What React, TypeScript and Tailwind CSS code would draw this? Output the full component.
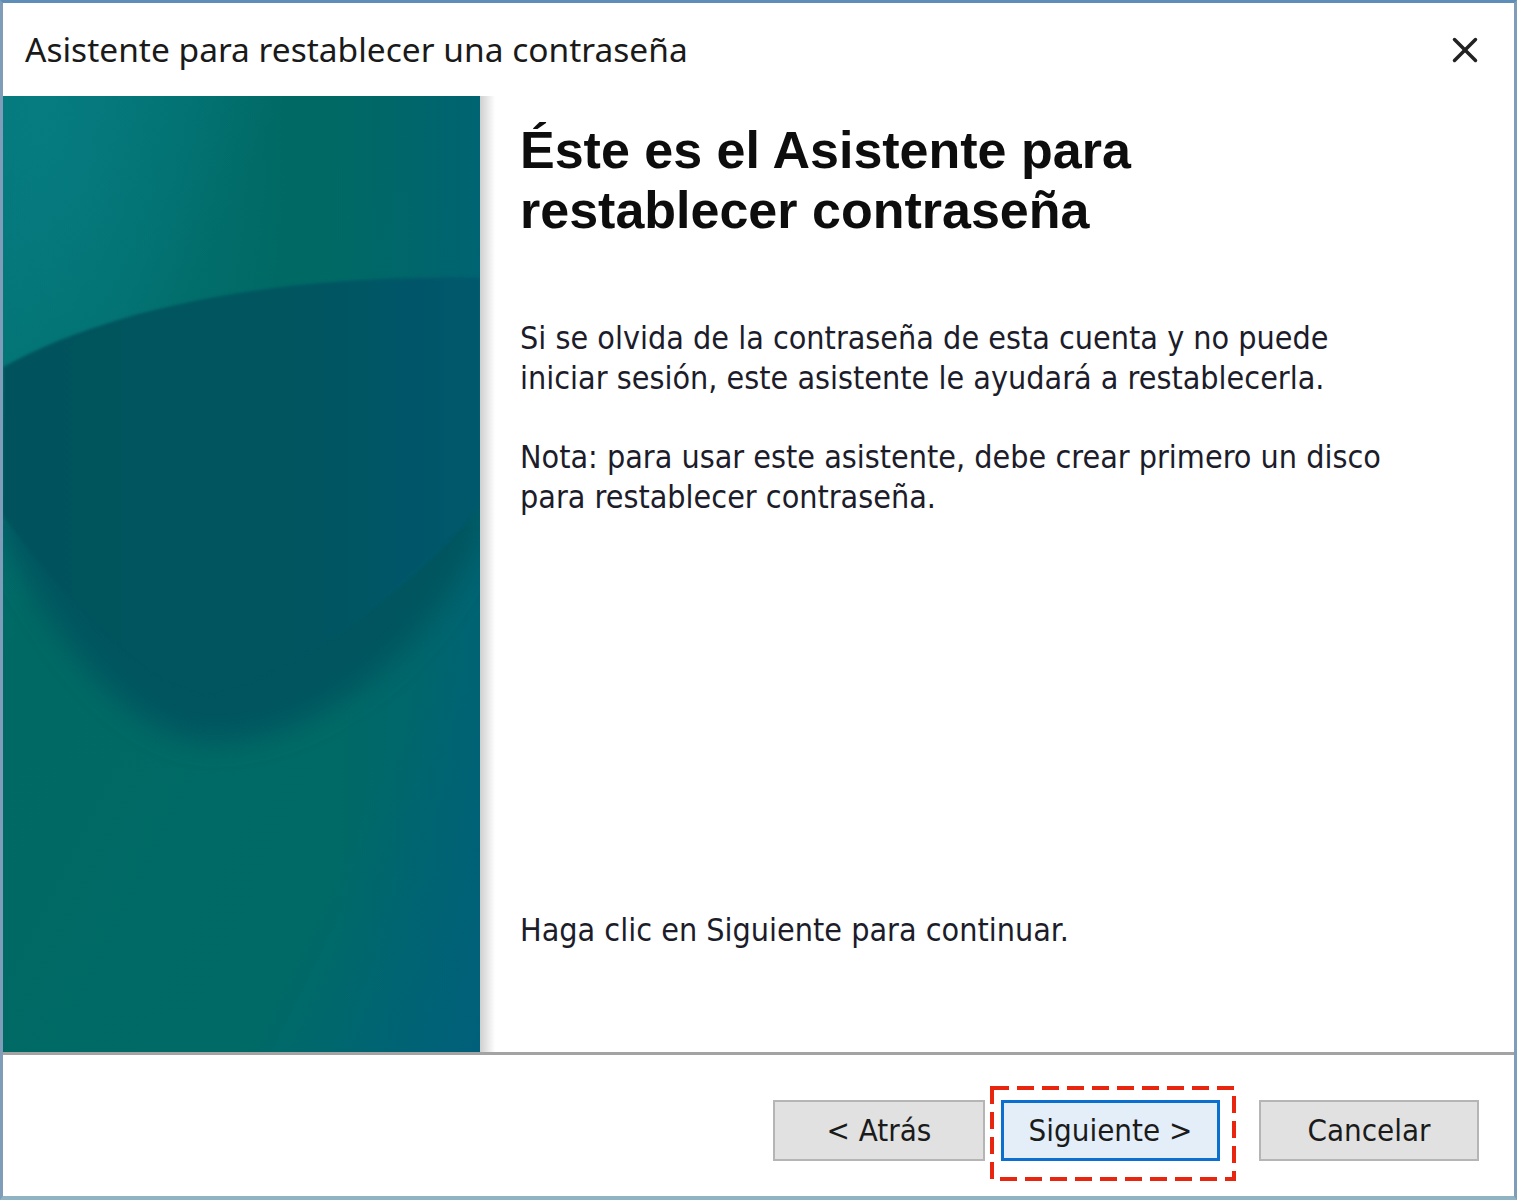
import { X } from "lucide-react";

const body = { fontFamily: '"DejaVu Sans Condensed", "DejaVu Sans", sans-serif' };

const WizardArt = () => (
  <svg viewBox="0 0 477 956" preserveAspectRatio="none" className="h-full w-full">
    <defs>
      <linearGradient id="base" x1="0" y1="0" x2="1" y2="1">
        <stop offset="0" stopColor="#03777b" />
        <stop offset="0.3" stopColor="#006964" />
        <stop offset="0.75" stopColor="#006a66" />
        <stop offset="1" stopColor="#00627a" />
      </linearGradient>
      <radialGradient id="glow" cx="0.1" cy="0.04" r="0.5">
        <stop offset="0" stopColor="#077e84" stopOpacity="0.7" />
        <stop offset="1" stopColor="#077e84" stopOpacity="0" />
      </radialGradient>
      <linearGradient id="dark" x1="0" y1="0" x2="1" y2="0">
        <stop offset="0" stopColor="#00535c" />
        <stop offset="0.6" stopColor="#00545f" />
        <stop offset="1" stopColor="#00586c" />
      </linearGradient>
      <linearGradient id="edge" x1="0" y1="0" x2="1" y2="0">
        <stop offset="0" stopColor="#005f74" stopOpacity="0" />
        <stop offset="1" stopColor="#005f7a" stopOpacity="0.6" />
      </linearGradient>
      <filter id="soft" x="-20%" y="-20%" width="140%" height="140%">
        <feGaussianBlur stdDeviation="14" />
      </filter>
      <filter id="softer" x="-5%" y="-5%" width="110%" height="110%">
        <feGaussianBlur stdDeviation="1.5" />
      </filter>
    </defs>
    <rect width="477" height="956" fill="url(#base)" />
    <rect width="477" height="956" fill="url(#glow)" />
    <rect x="330" width="147" height="956" fill="url(#edge)" />
    <path
      d="M0 330 C 80 300, 200 380, 477 330 L 477 440 C 420 570, 300 650, 200 645 C 120 635, 50 540, 0 440 Z"
      fill="#00555f"
      filter="url(#soft)"
    />
    <path
      d="M0 271 C 120 205, 300 178, 477 182 L 477 410 C 430 470, 330 560, 210 600 C 130 590, 60 500, 0 420 Z"
      fill="url(#dark)"
      filter="url(#softer)"
    />
  </svg>
);

const Button = ({ label, primary, wide }: { label: string; primary?: boolean; wide?: boolean }) => (
  <button
    className={
      primary
        ? "flex h-[61px] w-[219px] items-center justify-center border-[3px] border-[#0a6fcf] bg-[#e3eef9] text-[31px] text-[#1b1b1b]"
        : wide
          ? "flex h-[61px] w-[220px] items-center justify-center border-2 border-[#b5b5b5] bg-[#e1e1e1] text-[31px] text-[#1b1b1b]"
          : "flex h-[61px] w-[212px] items-center justify-center border-2 border-[#b5b5b5] bg-[#e1e1e1] text-[31px] text-[#1b1b1b]"
    }
    style={body}
  >
    {label}
  </button>
);

export default function App() {
  return (
    <div className="flex h-[1200px] w-[1517px] flex-col border-x-[3px] border-b-[4px] border-t-[3px] border-x-[#7f9db8] border-b-[#8fb3c3] border-t-[#5e8db8] bg-white">
      <div className="flex h-[93px] shrink-0 items-center justify-between pl-[22px] pr-[28px]">
        <span
          className="text-[33.5px] text-[#1a1a1a]"
          style={{ fontFamily: '"Noto Sans", "Open Sans", sans-serif' }}
        >
          Asistente para restablecer una contraseña
        </span>
        <X size={42} strokeWidth={2} className="text-[#222]" />
      </div>

      <div className="flex h-[956px] shrink-0">
        <div className="w-[477px] shrink-0">
          <WizardArt />
        </div>
        <div className="w-[15px] shrink-0 bg-gradient-to-r from-[#cfcfcf] to-white" />
        <div className="flex flex-1 flex-col pl-[25px] pb-[102px] pt-[24px]">
          <h1
            className="text-[52px] font-bold leading-[60px] text-[#0d0d0d]"
            style={{ fontFamily: '"Liberation Sans", Arial, sans-serif' }}
          >
            Éste es el Asistente para
            <br />
            restablecer contraseña
          </h1>
          <div className="mt-[78px] text-[32px] leading-[40px] text-[#1c1c2a]" style={body}>
            <p>
              Si se olvida de la contraseña de esta cuenta y no puede
              <br />
              iniciar sesión, este asistente le ayudará a restablecerla.
            </p>
            <p className="mt-[39px]">
              Nota: para usar este asistente, debe crear primero un disco
              <br />
              para restablecer contraseña.
            </p>
          </div>
          <p className="mt-auto text-[32px] leading-[40px] text-[#1c1c2a]" style={body}>
            Haga clic en Siguiente para continuar.
          </p>
        </div>
      </div>

      <div className="h-[3px] shrink-0 bg-[#a3a3a3]" />

      <div className="flex flex-1 items-start justify-end pr-[35px] pt-[45px]">
        <Button label="< Atrás" />
        <div className="relative ml-[16px]">
          <Button label="Siguiente >" primary />
          <svg className="absolute -left-[11px] -top-[14px] h-[93px] w-[246px] overflow-visible">
            <rect
              x="2"
              y="2"
              width="242"
              height="91"
              fill="none"
              stroke="#e8250f"
              strokeWidth="4"
              strokeDasharray="17 8"
            />
          </svg>
        </div>
        <div className="ml-[39px]">
          <Button label="Cancelar" wide />
        </div>
      </div>
    </div>
  );
}
